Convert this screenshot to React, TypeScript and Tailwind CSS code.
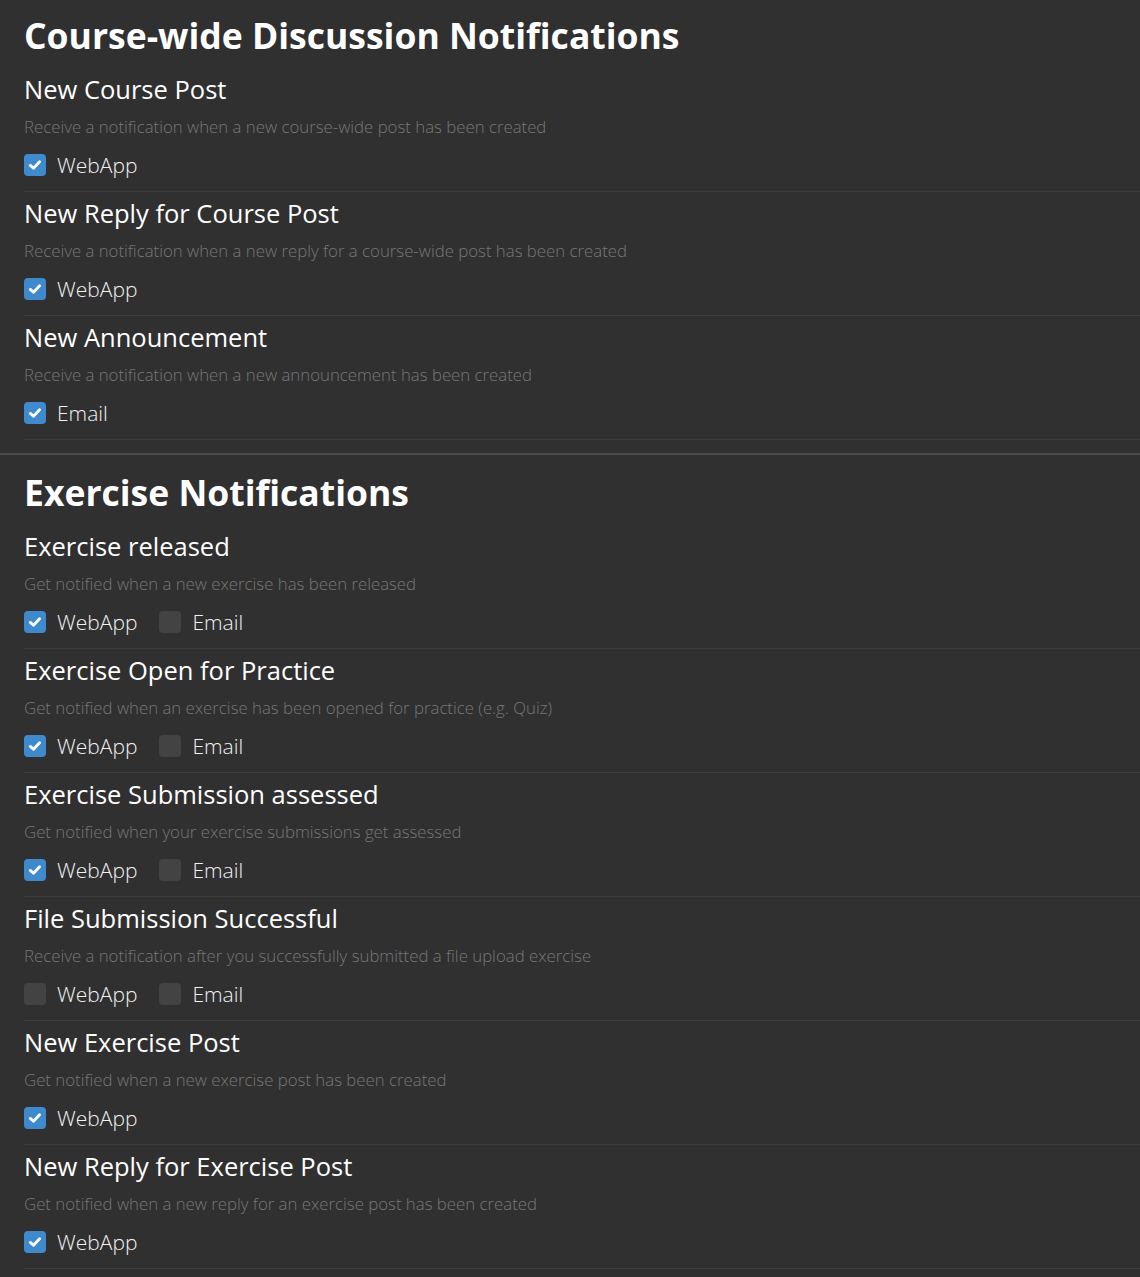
import { useState } from "react";

type Option = { label: string; checked: boolean };
type Setting = { title: string; description: string; options: Option[] };
type Section = { heading: string; settings: Setting[] };

const sections: Section[] = [
  {
    heading: "Course-wide Discussion Notifications",
    settings: [
      {
        title: "New Course Post",
        description: "Receive a notification when a new course-wide post has been created",
        options: [{ label: "WebApp", checked: true }],
      },
      {
        title: "New Reply for Course Post",
        description: "Receive a notification when a new reply for a course-wide post has been created",
        options: [{ label: "WebApp", checked: true }],
      },
      {
        title: "New Announcement",
        description: "Receive a notification when a new announcement has been created",
        options: [{ label: "Email", checked: true }],
      },
    ],
  },
  {
    heading: "Exercise Notifications",
    settings: [
      {
        title: "Exercise released",
        description: "Get notified when a new exercise has been released",
        options: [
          { label: "WebApp", checked: true },
          { label: "Email", checked: false },
        ],
      },
      {
        title: "Exercise Open for Practice",
        description: "Get notified when an exercise has been opened for practice (e.g. Quiz)",
        options: [
          { label: "WebApp", checked: true },
          { label: "Email", checked: false },
        ],
      },
      {
        title: "Exercise Submission assessed",
        description: "Get notified when your exercise submissions get assessed",
        options: [
          { label: "WebApp", checked: true },
          { label: "Email", checked: false },
        ],
      },
      {
        title: "File Submission Successful",
        description: "Receive a notification after you successfully submitted a file upload exercise",
        options: [
          { label: "WebApp", checked: false },
          { label: "Email", checked: false },
        ],
      },
      {
        title: "New Exercise Post",
        description: "Get notified when a new exercise post has been created",
        options: [{ label: "WebApp", checked: true }],
      },
      {
        title: "New Reply for Exercise Post",
        description: "Get notified when a new reply for an exercise post has been created",
        options: [{ label: "WebApp", checked: true }],
      },
    ],
  },
];

function Checkbox({ label, initial }: { label: string; initial: boolean }) {
  const [checked, setChecked] = useState(initial);
  return (
    <label className="flex items-center cursor-pointer select-none">
      <button
        type="button"
        onClick={() => setChecked((c) => !c)}
        className={`w-[22px] h-[22px] rounded-[4px] flex items-center justify-center ${
          checked ? "bg-[#3e8acc]" : "bg-[#434343]"
        }`}
      >
        {checked && (
          <svg width="14" height="14" viewBox="0 0 14 14" fill="none">
            <polyline
              points="2.3,7.4 5.5,10.3 11.6,3.7"
              stroke="white"
              strokeWidth="2.8"
              strokeLinecap="round"
              strokeLinejoin="round"
            />
          </svg>
        )}
      </button>
      <span className="ml-[11px] text-[21px] leading-[28px] font-light text-[#f2f2f2]">
        {label}
      </span>
    </label>
  );
}

function SettingRow({ setting }: { setting: Setting }) {
  return (
    <div className="pt-[3px] pb-[12px] border-b border-[#3d3d3d]">
      <h4 className="text-[25.5px] leading-[36px] text-white">{setting.title}</h4>
      <p className="mt-[8px] text-[16.8px] leading-[24px] font-light text-[#777777]">
        {setting.description}
      </p>
      <div className="mt-[12px] flex items-center gap-[22px]">
        {setting.options.map((o) => (
          <Checkbox key={o.label} label={o.label} initial={o.checked} />
        ))}
      </div>
    </div>
  );
}

export default function App() {
  return (
    <div
      className="min-h-screen bg-[#303030] pt-[14px]"
      style={{ fontFamily: '"Open Sans", "Noto Sans", sans-serif' }}
    >
      {sections.map((section, i) => (
        <div key={section.heading}>
          {i > 0 && <div className="mt-[13px] mb-[16px] h-[2px] bg-[#4a4a4a]" />}
          <div className="pl-[24px]">
            <h2 className="text-[35.5px] leading-[43px] font-bold text-white">
              {section.heading}
            </h2>
            <div className="mt-[11px]">
              {section.settings.map((s) => (
                <SettingRow key={s.title} setting={s} />
              ))}
            </div>
          </div>
        </div>
      ))}
    </div>
  );
}
